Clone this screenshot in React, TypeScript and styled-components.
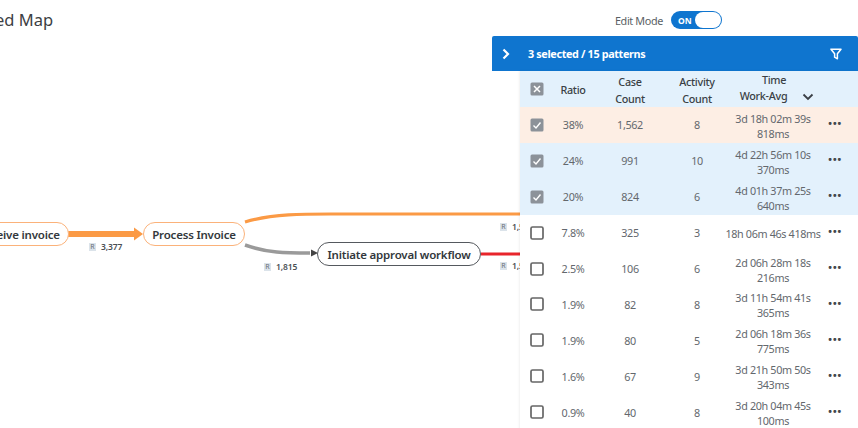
import React from "react";
import styled, { createGlobalStyle } from "styled-components";

const GlobalStyle = createGlobalStyle`
    html, body {
        margin: 0;
        padding: 0;
        background: #fff;
    }
    body {
        font-family: "Noto Sans", "Open Sans", sans-serif;
    }
`;

const rows = [
    { ratio: "38%", cases: "1,562", activity: "8", time: ["3d 18h 02m 39s", "818ms"], tone: "peach", checked: true },
    { ratio: "24%", cases: "991", activity: "10", time: ["4d 22h 56m 10s", "370ms"], tone: "blue", checked: true },
    { ratio: "20%", cases: "824", activity: "6", time: ["4d 01h 37m 25s", "640ms"], tone: "blue", checked: true },
    { ratio: "7.8%", cases: "325", activity: "3", time: ["18h 06m 46s 418ms"], tone: "none", checked: false },
    { ratio: "2.5%", cases: "106", activity: "6", time: ["2d 06h 28m 18s", "216ms"], tone: "none", checked: false },
    { ratio: "1.9%", cases: "82", activity: "8", time: ["3d 11h 54m 41s", "365ms"], tone: "none", checked: false },
    { ratio: "1.9%", cases: "80", activity: "5", time: ["2d 06h 18m 36s", "775ms"], tone: "none", checked: false },
    { ratio: "1.6%", cases: "67", activity: "9", time: ["3d 21h 50m 50s", "343ms"], tone: "none", checked: false },
    { ratio: "0.9%", cases: "40", activity: "8", time: ["3d 20h 04m 45s", "100ms"], tone: "none", checked: false },
];

const tones: Record<string, string> = {
    peach: "#fdeee4",
    blue: "#e3f1fc",
    none: "#ffffff",
};

function Check({ state }: { state: "on" | "off" | "mixed" }) {
    if (state === "off") {
        return (
            <svg width="14" height="14" viewBox="0 0 14 14">
                <rect x="1" y="1" width="12" height="12" rx="1.5" fill="#fff" stroke="#666" strokeWidth="1.7" />
            </svg>
        );
    }
    return (
        <svg width="14" height="14" viewBox="0 0 14 14">
            <rect x="0.5" y="0.5" width="13" height="13" rx="1.5" fill="#8c9299" />
            {state === "on" ? (
                <path d="M3.5 7.5 L6 10 L10.5 4.5" fill="none" stroke="#fff" strokeWidth="1.4" />
            ) : (
                <path d="M4 4 L10 10 M10 4 L4 10" fill="none" stroke="#fff" strokeWidth="1.5" />
            )}
        </svg>
    );
}

function EdgeLabel({ value, x, y }: { value: string; x: number; y: number }) {
    return (
        <Label style={{ left: x, top: y }}>
            <LabelIcon>R</LabelIcon>
            {value}
        </Label>
    );
}

export default function App() {
    return (
        <Page>
            <GlobalStyle />
            <Canvas>
                <svg width="520" height="428" viewBox="0 0 520 428">
                    <path d="M60 234 H134" stroke="#fb9a45" strokeWidth="6" fill="none" />
                    <path d="M134 227.5 L143 234 L134 240.5 Z" fill="#fb9a45" />
                    <path d="M245 222 C275 213 310 214 345 214 H520" stroke="#fb9a45" strokeWidth="3.2" fill="none" />
                    <path d="M245 245 C268 253 285 253 310 253" stroke="#9a9a9a" strokeWidth="3.6" fill="none" />
                    <path d="M311 249.5 L318 253 L311 256.5 Z" fill="#444" />
                    <path d="M481 254 H520" stroke="#e8252b" strokeWidth="3.2" fill="none" />
                </svg>
                <Node $tone="orange" style={{ left: -32, top: 222, width: 101 }}>Receive invoice</Node>
                <Node $tone="orange" style={{ left: 143, top: 222, width: 102 }}>Process Invoice</Node>
                <Node $tone="dark" style={{ left: 317, top: 242, width: 164 }}>Initiate approval workflow</Node>
                <EdgeLabel value="3,377" x={89} y={241} />
                <EdgeLabel value="1,815" x={264} y={261} />
                <EdgeLabel value="1,562" x={500} y={221} />
                <EdgeLabel value="1,562" x={500} y={260} />
            </Canvas>

            <TopBar>
                <Title>Discovered Map</Title>
                <EditMode>
                    Edit Mode
                    <Toggle>
                        <ToggleText>ON</ToggleText>
                        <Knob />
                    </Toggle>
                </EditMode>
            </TopBar>

            <Panel>
                <PanelHeader>
                    <svg width="10" height="12" viewBox="0 0 10 12">
                        <path d="M2.5 1.5 L7 6 L2.5 10.5" fill="none" stroke="#fff" strokeWidth="2.2" />
                    </svg>
                    <PanelTitle>3 selected / 15 patterns</PanelTitle>
                    <svg width="12" height="12" viewBox="0 0 12 12">
                        <path d="M1 1.2 H11 L7.4 5.8 V10.8 L4.6 9.2 V5.8 Z" fill="none" stroke="#fff" strokeWidth="1.5" strokeLinejoin="round" />
                    </svg>
                </PanelHeader>
                <Table>
                    <HeadRow>
                        <Cell><Check state="mixed" /></Cell>
                        <HeadCell>Ratio</HeadCell>
                        <HeadCell $two>Case<br />Count</HeadCell>
                        <HeadCell $two>Activity<br />Count</HeadCell>
                        <TimeHead>
                            <TimeLabel>Time</TimeLabel>
                            <SortLine>
                                Work-Avg
                                <svg width="12" height="8" viewBox="0 0 12 8">
                                    <path d="M1.5 1.5 L6 6 L10.5 1.5" fill="none" stroke="#3a3f45" strokeWidth="1.8" />
                                </svg>
                            </SortLine>
                        </TimeHead>
                        <Cell />
                    </HeadRow>
                    {rows.map((row) => (
                        <Row key={row.time.join() + row.ratio} $tone={row.tone}>
                            <Cell><Check state={row.checked ? "on" : "off"} /></Cell>
                            <Cell>{row.ratio}</Cell>
                            <Cell>{row.cases}</Cell>
                            <Cell>{row.activity}</Cell>
                            <TimeCell>
                                {row.time.map((t) => <div key={t}>{t}</div>)}
                            </TimeCell>
                            <Dots>•••</Dots>
                        </Row>
                    ))}
                </Table>
            </Panel>
        </Page>
    );
}

const Page = styled.div`
    position: relative;
    width: 858px;
    height: 428px;
    overflow: hidden;
    background: #fff;
`;

const TopBar = styled.header`
    display: flex;
    align-items: center;
    justify-content: space-between;
    height: 36px;
    margin-left: -71px;
    padding-right: 136px;
    position: relative;
`;

const Title = styled.h1`
    margin: 0;
    font-size: 16.5px;
    font-weight: 400;
    color: #3c4043;
    position: relative;
    top: 1px;
`;

const EditMode = styled.div`
    display: flex;
    align-items: center;
    gap: 8px;
    font-size: 10.8px;
    letter-spacing: -0.35px;
    color: #5a5f64;
    position: relative;
    top: 2px;
`;

const Toggle = styled.div`
    display: flex;
    align-items: center;
    justify-content: space-between;
    width: 51px;
    height: 18px;
    box-sizing: border-box;
    padding: 1px 1px 1px 7px;
    border-radius: 9px;
    background: #0f75cf;
`;

const ToggleText = styled.span`
    font-size: 8.5px;
    font-weight: 700;
    letter-spacing: 0;
    color: #fff;
`;

const Knob = styled.span`
    width: 26px;
    height: 16px;
    border-radius: 8px;
    background: #fff;
`;

const Canvas = styled.div`
    position: absolute;
    inset: 0 auto 0 0;
    width: 520px;
    overflow: hidden;

    > svg {
        display: block;
    }
`;

const Node = styled.div<{ $tone: string }>`
    position: absolute;
    box-sizing: border-box;
    height: 24px;
    display: flex;
    align-items: center;
    justify-content: center;
    white-space: nowrap;
    background: #fff;
    border-radius: 12px;
    font-size: 11.5px;
    font-weight: 600;
    letter-spacing: -0.2px;
    color: #33383c;
    border: 1px solid ${(p) => (p.$tone === "orange" ? "#fbb27a" : "#55595e")};
`;

const Label = styled.div`
    position: absolute;
    display: flex;
    align-items: center;
    gap: 5px;
    font-size: 8.5px;
    font-weight: 600;
    letter-spacing: -0.1px;
    line-height: 12px;
    color: #4a4f54;
    white-space: nowrap;
`;

const LabelIcon = styled.span`
    display: inline-flex;
    align-items: center;
    justify-content: center;
    width: 7px;
    height: 8px;
    font-size: 7px;
    font-weight: 400;
    background: #dbe3ea;
    color: #6a7077;
`;

const Panel = styled.aside`
    position: absolute;
    top: 36px;
    right: 0;
    bottom: 0;
    width: 366px;
    display: flex;
    flex-direction: column;
`;

const PanelHeader = styled.div`
    display: flex;
    align-items: center;
    height: 35px;
    flex: none;
    padding: 0 16px 0 9px;
    background: #0f75cf;
    border-radius: 2px 2px 0 0;
    color: #fff;
`;

const PanelTitle = styled.div`
    flex: 1;
    margin-left: 17px;
    font-size: 10.8px;
    font-weight: 700;
    letter-spacing: -0.35px;
`;

const Table = styled.div`
    flex: 1;
    margin-left: 28px;
    background: #fff;
    box-shadow: -1px 0 2px rgba(0, 0, 0, 0.06);
`;

const columns = "34px 38px 76px 58px 94px 1fr";

const HeadRow = styled.div`
    display: grid;
    grid-template-columns: ${columns};
    height: 36px;
    background: #e3f1fc;
    align-items: center;
    justify-items: center;
`;

const Row = styled.div<{ $tone: string }>`
    display: grid;
    grid-template-columns: ${columns};
    height: 35.9px;
    align-items: center;
    justify-items: center;
    background: ${(p) => tones[p.$tone]};
`;

const Cell = styled.div`
    display: flex;
    align-items: center;
    justify-content: center;
    font-size: 10.8px;
    letter-spacing: -0.35px;
    color: #63686d;
`;

const HeadCell = styled.div<{ $two?: boolean }>`
    font-size: 10.8px;
    letter-spacing: -0.3px;
    line-height: 17px;
    font-weight: 500;
    color: #3a3f45;
    text-align: center;
    padding-top: ${(p) => (p.$two ? "1px" : "0")};
`;

const TimeHead = styled(HeadCell)`
    line-height: 16px;
    position: relative;
    left: 4px;
    top: -1px;
`;

const TimeLabel = styled.div`
    padding-right: 6px;
`;

const SortLine = styled.div`
    display: flex;
    align-items: center;
    gap: 15px;
    white-space: nowrap;

    > svg {
        margin-top: 2px;
    }
`;

const TimeCell = styled.div`
    font-size: 10.8px;
    letter-spacing: -0.35px;
    line-height: 15px;
    padding-top: 2px;
    color: #63686d;
    text-align: center;
    white-space: nowrap;
`;

const Dots = styled.div`
    font-size: 11px;
    font-weight: 600;
    letter-spacing: 0.5px;
    color: #43484d;
    position: relative;
    left: -4px;
    top: -2px;
`;
